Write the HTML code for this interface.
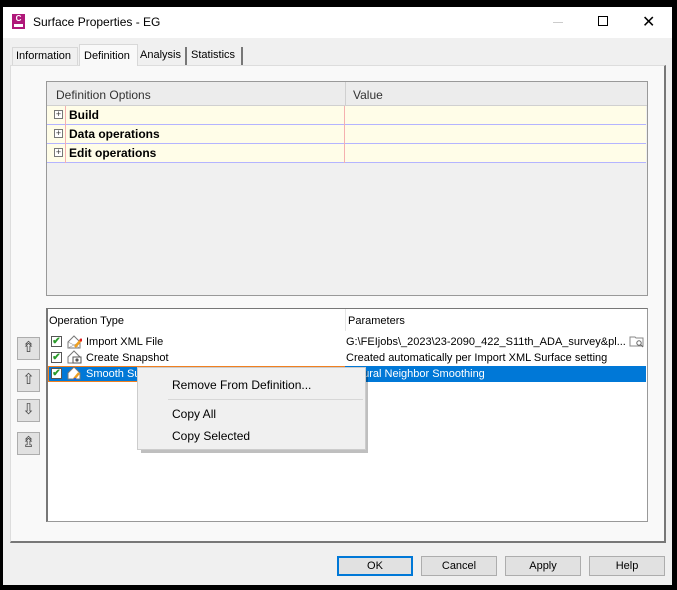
<!DOCTYPE html>
<html><head><style>
*{margin:0;padding:0;box-sizing:border-box}
body{width:677px;height:590px;background:#000;position:relative;overflow:hidden;font-family:"Liberation Sans",sans-serif;font-size:11px;color:#000}
.a{position:absolute}
.btn{position:absolute;background:#e1e1e1;border:1px solid #adadad;text-align:center;line-height:18px;font-size:11px}
.sb{position:absolute;left:17px;width:23px;height:23px;background:#e1e1e1;border:1px solid #adadad;color:#444;text-align:center;font-size:15px;line-height:20px}
.row{position:absolute;left:47px;width:599px;height:19px;background:#fffde8;border-bottom:1px solid #b4b4ff}
.row b{position:absolute;left:22px;top:2px;font-size:12px}
.plus{position:absolute;left:7px;top:4px;width:9px;height:9px;border:1px solid #777;font-size:9px;line-height:7px;text-align:center;color:#333;background:#fff}
.chk{position:absolute;left:3px;width:11px;height:11px;border:1px solid #555;background:#fff;color:#2a9a2a;font-size:10px;line-height:9px;text-align:center;font-weight:bold}
.ico{position:absolute;left:19px;width:15px;height:14px}
</style></head><body>
<div class="a" style="left:3px;top:7px;width:669px;height:578px;background:#f0f0f0"></div>
<div class="a" style="left:3px;top:7px;width:669px;height:31px;background:#fff"></div>
<div class="a" style="left:12px;top:14px;width:13px;height:15px;background:#b0187a;color:#fff;font-size:8px;font-weight:bold;text-align:center;line-height:10px">C<div style="background:#fff;height:3px;margin:0 2px"></div></div>
<div class="a" style="left:33px;top:15px;font-size:12px">Surface Properties - EG</div>
<div class="a" style="left:553px;top:22px;width:10px;height:1px;background:#ccc"></div>
<div class="a" style="left:598px;top:16px;width:10px;height:10px;border:1px solid #000"></div>
<div class="a" style="left:642px;top:12px;font-size:16px">✕</div>
<!-- tabs -->
<div class="a" style="left:12px;top:47px;width:66px;height:18px;border:1px solid #d8d8d8;border-bottom:none;background:#f0f0f0;padding:2px 3px">Information</div>
<div class="a" style="left:79px;top:44px;width:59px;height:22px;border:1px solid #d8d8d8;border-bottom:none;background:#f9f9f9;padding:5px 4px;z-index:2">Definition</div>
<div class="a" style="left:138px;top:47px;width:49px;height:18px;border-right:2px solid #777;background:#f0f0f0;padding:2px 2px">Analysis</div>
<div class="a" style="left:188px;top:47px;width:55px;height:18px;border-right:2px solid #777;background:#f0f0f0;padding:2px 3px">Statistics</div>
<div class="a" style="left:10px;top:65px;width:656px;height:478px;background:#f9f9f9;border:1px solid #ddd;border-right:2px solid #777;border-bottom:2px solid #777"></div>
<!-- def grid -->
<div class="a" style="left:46px;top:81px;width:602px;height:215px;background:#f0f0f0;border:1px solid #999"></div>
<div class="a" style="left:47px;top:82px;width:600px;height:24px;background:#ececec;border-bottom:1px solid #d0d0d0"></div>
<div class="a" style="left:56px;top:88px;font-size:12px;color:#333">Definition Options</div>
<div class="a" style="left:345px;top:82px;width:1px;height:24px;background:#d0d0d0"></div>
<div class="a" style="left:353px;top:88px;font-size:12px;color:#333">Value</div>
<div class="row" style="top:106px"><div class="plus">+</div><b>Build</b></div>
<div class="row" style="top:125px"><div class="plus">+</div><b>Data operations</b></div>
<div class="row" style="top:144px"><div class="plus">+</div><b>Edit operations</b></div>
<div class="a" style="left:65px;top:106px;width:1px;height:57px;background:#f5b0b0"></div>
<div class="a" style="left:344px;top:106px;width:1px;height:57px;background:#f5b0b0"></div>
<!-- side buttons -->
<div class="sb" style="top:337px">⇮</div>
<div class="sb" style="top:369px">⇧</div>
<div class="sb" style="top:399px">⇩</div>
<div class="sb" style="top:432px">⇯</div>
<!-- op list -->
<div class="a" style="left:46px;top:308px;width:602px;height:214px;background:#fff;border:1px solid #999;border-top:1px solid #777;border-left:2px solid #777"></div>
<div class="a" style="left:345px;top:309px;width:1px;height:22px;background:#e5e5e5"></div>
<div class="a" style="left:49px;top:315px">Operation Type</div>
<div class="a" style="left:348px;top:315px">Parameters</div>
<div class="a" style="left:48px;top:366px;width:598px;height:16px;background:#0078d7"></div>
<div class="a" style="left:48px;top:366px;width:297px;height:16px;border:1px solid #f08020"></div>
<div class="a" style="left:48px;top:334px;width:598px;height:50px">
 <div class="chk" style="top:2px">✔</div><svg class="ico" style="top:1px" viewBox="0 0 15 14"><path d="M1 7L7 1L13 7V13H1Z" fill="#fff" stroke="#777"/><path d="M1 13L13 7M1 7L13 13" stroke="#999" stroke-width=".6"/><path d="M8 12L14 5" stroke="#f0a020" stroke-width="2.5"/><circle cx="14" cy="5" r="1.5" fill="#e02020"/></svg><div class="a" style="left:38px;top:2px">Import XML File</div>
 <div class="chk" style="top:18px">✔</div><svg class="ico" style="top:16px" viewBox="0 0 15 14"><path d="M1 7L7 1L13 7V13H1Z" fill="#fff" stroke="#777"/><rect x="6" y="7" width="8" height="6" fill="#fff" stroke="#555"/><circle cx="10" cy="10" r="1.6" fill="#555"/></svg><div class="a" style="left:38px;top:18px">Create Snapshot</div>
 <div class="chk" style="top:34px">✔</div><svg class="ico" style="top:32px" viewBox="0 0 15 14"><path d="M1 7L7 1L13 7V13H1Z" fill="#fff" stroke="#777"/><path d="M7 13L12 7" stroke="#f0a020" stroke-width="2.5"/><circle cx="8" cy="13" r="1.3" fill="#2060e0"/></svg><div class="a" style="left:38px;top:34px;color:#fff">Smooth Surf</div>
</div>
<div class="a" style="left:346px;top:336px;width:282px;overflow:hidden;white-space:nowrap">G:\FEIjobs\_2023\23-2090_422_S11th_ADA_survey&amp;pl...</div>
<svg class="a" style="left:629px;top:334px" width="16" height="14" viewBox="0 0 16 14"><path d="M1 3H6L7 4H14V12H1Z" fill="#fff" stroke="#888"/><circle cx="10" cy="9" r="2.2" fill="none" stroke="#666"/><path d="M11.5 10.5L14 13" stroke="#666"/></svg>
<div class="a" style="left:346px;top:352px">Created automatically per Import XML Surface setting</div>
<div class="a" style="left:346px;top:368px;color:#fff">Natural Neighbor Smoothing</div>
<!-- context menu -->
<div class="a" style="left:141px;top:371px;width:227px;height:82px;background:rgba(0,0,0,.25)"></div>
<div class="a" style="left:137px;top:367px;width:229px;height:83px;background:#f0f0f0;border:1px solid #ccc">
 <div class="a" style="left:34px;top:10px;font-size:12px">Remove From Definition...</div>
 <div class="a" style="left:30px;top:31px;width:195px;height:1px;background:#d7d7d7"></div>
 <div class="a" style="left:34px;top:39px;font-size:12px">Copy All</div>
 <div class="a" style="left:34px;top:61px;font-size:12px">Copy Selected</div>
</div>
<!-- bottom buttons -->
<div class="btn" style="left:337px;top:556px;width:76px;height:20px;border:2px solid #0078d7;line-height:16px">OK</div>
<div class="btn" style="left:421px;top:556px;width:76px;height:20px">Cancel</div>
<div class="btn" style="left:505px;top:556px;width:76px;height:20px">Apply</div>
<div class="btn" style="left:589px;top:556px;width:76px;height:20px">Help</div>
</body></html>
